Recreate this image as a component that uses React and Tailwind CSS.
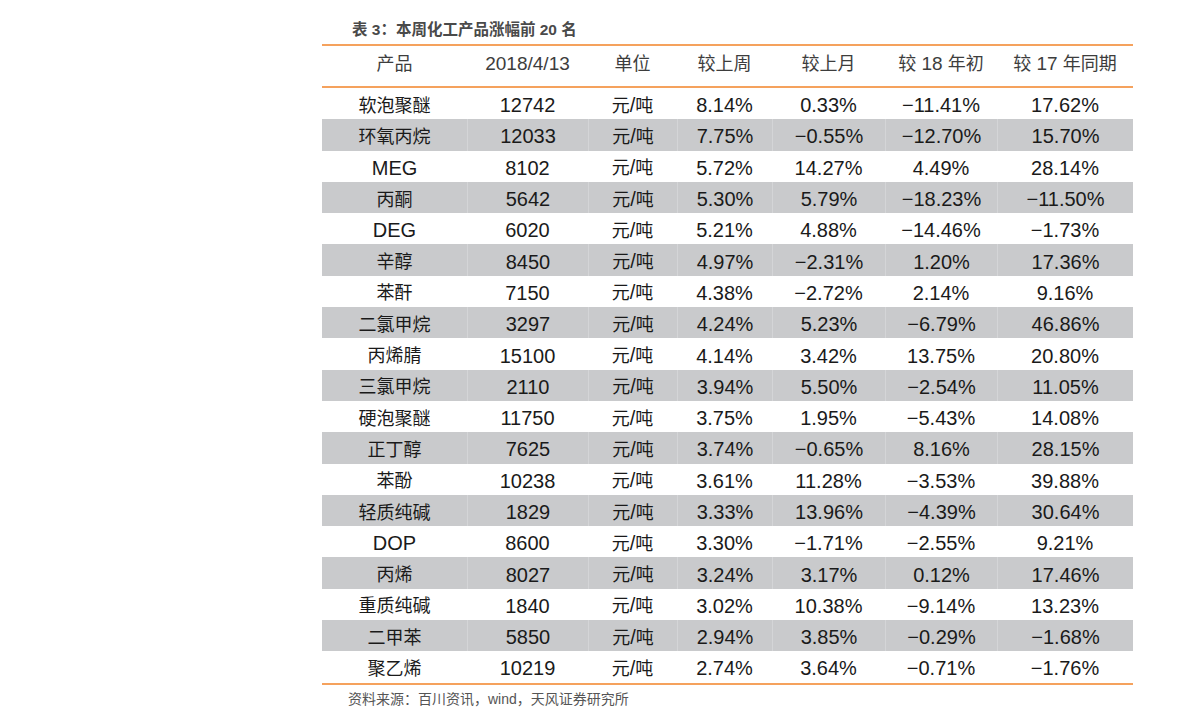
import React from "react";

const cols = [
  "w-[145px]",
  "w-[121px]",
  "w-[89px]",
  "w-[95px]",
  "w-[113px]",
  "w-[112px]",
  "w-[136px]",
];

const headers = ["产品", "2018/4/13", "单位", "较上周", "较上月", "较 18 年初", "较 17 年同期"];

const rows = [
  ["软泡聚醚", "12742", "元/吨", "8.14%", "0.33%", "−11.41%", "17.62%"],
  ["环氧丙烷", "12033", "元/吨", "7.75%", "−0.55%", "−12.70%", "15.70%"],
  ["MEG", "8102", "元/吨", "5.72%", "14.27%", "4.49%", "28.14%"],
  ["丙酮", "5642", "元/吨", "5.30%", "5.79%", "−18.23%", "−11.50%"],
  ["DEG", "6020", "元/吨", "5.21%", "4.88%", "−14.46%", "−1.73%"],
  ["辛醇", "8450", "元/吨", "4.97%", "−2.31%", "1.20%", "17.36%"],
  ["苯酐", "7150", "元/吨", "4.38%", "−2.72%", "2.14%", "9.16%"],
  ["二氯甲烷", "3297", "元/吨", "4.24%", "5.23%", "−6.79%", "46.86%"],
  ["丙烯腈", "15100", "元/吨", "4.14%", "3.42%", "13.75%", "20.80%"],
  ["三氯甲烷", "2110", "元/吨", "3.94%", "5.50%", "−2.54%", "11.05%"],
  ["硬泡聚醚", "11750", "元/吨", "3.75%", "1.95%", "−5.43%", "14.08%"],
  ["正丁醇", "7625", "元/吨", "3.74%", "−0.65%", "8.16%", "28.15%"],
  ["苯酚", "10238", "元/吨", "3.61%", "11.28%", "−3.53%", "39.88%"],
  ["轻质纯碱", "1829", "元/吨", "3.33%", "13.96%", "−4.39%", "30.64%"],
  ["DOP", "8600", "元/吨", "3.30%", "−1.71%", "−2.55%", "9.21%"],
  ["丙烯", "8027", "元/吨", "3.24%", "3.17%", "0.12%", "17.46%"],
  ["重质纯碱", "1840", "元/吨", "3.02%", "10.38%", "−9.14%", "13.23%"],
  ["二甲苯", "5850", "元/吨", "2.94%", "3.85%", "−0.29%", "−1.68%"],
  ["聚乙烯", "10219", "元/吨", "2.74%", "3.64%", "−0.71%", "−1.76%"],
];

const font = {
  fontFamily: '"Liberation Sans", Arial, "Noto Sans CJK SC", sans-serif',
};

// CJK glyphs come out wider than the latin ones, so they get their own size
function Mixed({ text, cjk }) {
  const parts = text.split(/([\u4e00-\u9fff]+)/).filter(Boolean);
  return (
    <span>
      {parts.map((p, i) =>
        /[\u4e00-\u9fff]/.test(p) ? (
          <span key={i} className={cjk}>
            {p}
          </span>
        ) : (
          <span key={i}>{p}</span>
        )
      )}
    </span>
  );
}

export default function App() {
  return (
    <div className="w-[1191px] h-[728px] bg-white" style={font}>
      <div className="pl-[322px] pt-[18px]">
        <div className="pl-[30px] h-[25px] text-[15.5px] font-bold text-[#4a4a4a] leading-[24px]">
          表 3：本周化工产品涨幅前 20 名
        </div>
        <div className="w-[811px] mt-[1px] border-t-2 border-[#f5a25d]">
          <div className="flex h-[42px] border-b-2 border-[#f5a25d] text-[19px] text-[#3d3d3d]">
            {headers.map((h, i) => (
              <div key={i} className={`${cols[i]} text-center pt-[6px] leading-[24px]`}>
                <Mixed text={h} cjk="text-[18px]" />
              </div>
            ))}
          </div>
          {rows.map((r, ri) => (
            <div
              key={ri}
              className={`flex h-[31.3px] text-[20px] text-[#1a1a1a] ${
                ri % 2 === 1 ? "bg-[#c9cacc]" : "bg-white"
              }`}
            >
              {r.map((c, ci) => (
                <div
                  key={ci}
                  className={`${cols[ci]} h-full flex items-center justify-center pt-[3px] leading-[24px] ${
                    ri % 2 === 1 && ci > 0 ? "border-l border-[#d4d5d7]" : ""
                  }`}
                >
                  <Mixed text={c} cjk="text-[18px]" />
                </div>
              ))}
            </div>
          ))}
          <div className="border-t-2 border-[#f5a25d]" />
        </div>
        <div className="pl-[26px] pt-[5px] text-[14px] text-[#555555] leading-[18px]">
          资料来源：百川资讯，wind，天风证券研究所
        </div>
      </div>
    </div>
  );
}
